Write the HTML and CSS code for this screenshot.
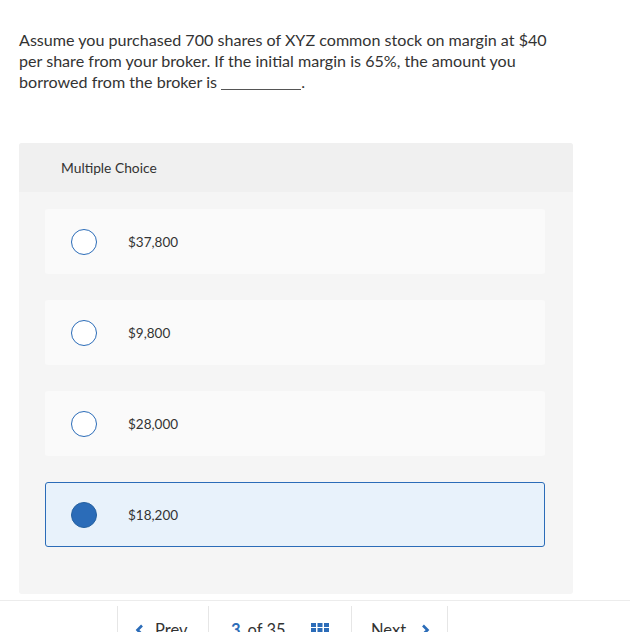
FILE: index.html
```html
<!DOCTYPE html>
<html lang="en">
<head>
    <meta charset="UTF-8">
    <meta name="viewport" content="width=device-width, initial-scale=1.0">
    <title>Question 3</title>
    <link rel="stylesheet" href="styles.css">
</head>
<body>
    <!-- Текст вопроса -->
    <p class="question">
        Assume you purchased 700 shares of XYZ common stock on margin at $40
        per share from your broker. If the initial margin is 65%, the amount you
        borrowed from the broker is <span class="blank"></span>.
    </p>

    <!-- Варианты ответа -->
    <div class="panel">
        <div class="panel-head">Multiple Choice</div>
        <div class="options">
            <div class="option">
                <span class="radio"></span>
                <span class="label">$37,800</span>
            </div>
            <div class="option">
                <span class="radio"></span>
                <span class="label">$9,800</span>
            </div>
            <div class="option">
                <span class="radio"></span>
                <span class="label">$28,000</span>
            </div>
            <div class="option selected">
                <span class="radio"></span>
                <span class="label">$18,200</span>
            </div>
        </div>
    </div>

    <!-- Навигация -->
    <div class="nav">
        <div class="nav-items">
            <div class="nav-item prev">
                <svg width="10" height="12" viewBox="0 0 10 12"><path d="M7 1.5 L2.5 6 L7 10.5" fill="none" stroke="#2b6cb8" stroke-width="2.6"/></svg>
                Prev
            </div>
            <div class="nav-item count">
                <span class="current">3</span> of 35
                <svg class="grid-icon" width="18" height="14" viewBox="0 0 18 14">
                    <rect x="0" y="0" width="5" height="4" fill="#2b6cb8"/>
                    <rect x="6.5" y="0" width="5" height="4" fill="#2b6cb8"/>
                    <rect x="13" y="0" width="5" height="4" fill="#2b6cb8"/>
                    <rect x="0" y="5" width="5" height="4" fill="#2b6cb8"/>
                    <rect x="6.5" y="5" width="5" height="4" fill="#2b6cb8"/>
                    <rect x="13" y="5" width="5" height="4" fill="#2b6cb8"/>
                    <rect x="0" y="10" width="5" height="4" fill="#2b6cb8"/>
                    <rect x="6.5" y="10" width="5" height="4" fill="#2b6cb8"/>
                    <rect x="13" y="10" width="5" height="4" fill="#2b6cb8"/>
                </svg>
            </div>
            <div class="nav-item next">
                Next
                <svg width="10" height="12" viewBox="0 0 10 12"><path d="M3 1.5 L7.5 6 L3 10.5" fill="none" stroke="#2b6cb8" stroke-width="2.6"/></svg>
            </div>
        </div>
    </div>
</body>
</html>
```

FILE: styles.css
```css
body {
    margin: 0;
    font-family: 'Lato', 'Open Sans', sans-serif;
    background-color: #fff;
    color: #333;
}

.question {
    margin: 0;
    padding: 29px 19px 0;
    font-size: 16.1px;
    line-height: 21px;
    width: 534px;
}

.blank {
    display: inline-block;
    width: 80px;
    border-bottom: 1px solid #555;
    vertical-align: -2px;
}

.panel {
    margin: 51px 0 0 19px;
    width: 554px;
    background: #f5f5f5;
    border-radius: 3px;
}

.panel-head {
    height: 49px;
    line-height: 49px;
    padding-left: 42px;
    background: #f0f0f0;
    border-radius: 3px 3px 0 0;
    font-size: 13.8px;
    color: #333;
}

.options {
    display: flex;
    flex-direction: column;
    gap: 26px;
    padding: 17px 28px 47px 26px;
}

.option {
    display: flex;
    align-items: center;
    height: 65px;
    box-sizing: border-box;
    padding-left: 26px;
    background: #fafafa;
    border: 1px solid transparent;
    border-radius: 3px;
    font-size: 13.5px;
}

.radio {
    width: 26px;
    height: 26px;
    box-sizing: border-box;
    border: 1.3px solid #2b6cb8;
    border-radius: 50%;
    background: #fff;
    margin-left: -1px;
    margin-right: 31px;
}

.option.selected {
    background: #e8f2fb;
    border-color: #2b6cb8;
}

.option.selected .radio {
    background: #2b6cb8;
    border-color: #24609f;
}

.nav {
    margin-top: 6px;
    border-top: 1px solid #ececec;
    padding-top: 5px;
}

.nav-items {
    display: flex;
    margin-left: 117px;
    height: 40px;
}

.nav-item {
    display: flex;
    align-items: center;
    gap: 8px;
    border-left: 1px solid #e6e6e6;
    font-size: 16.5px;
    color: #333;
    padding-top: 8px;
    box-sizing: border-box;
}

.nav-item.prev {
    width: 91px;
    padding-left: 17px;
    gap: 10px;
}

.nav-item.count {
    width: 143px;
    padding-left: 22px;
    gap: 7px;
}

.nav-item.count .current {
    color: #2b6cb8;
    font-weight: bold;
}

.grid-icon {
    margin-left: 18px;
}

.nav-item.next {
    width: 97px;
    padding-left: 19px;
    gap: 14px;
    border-right: 1px solid #e6e6e6;
}
```
